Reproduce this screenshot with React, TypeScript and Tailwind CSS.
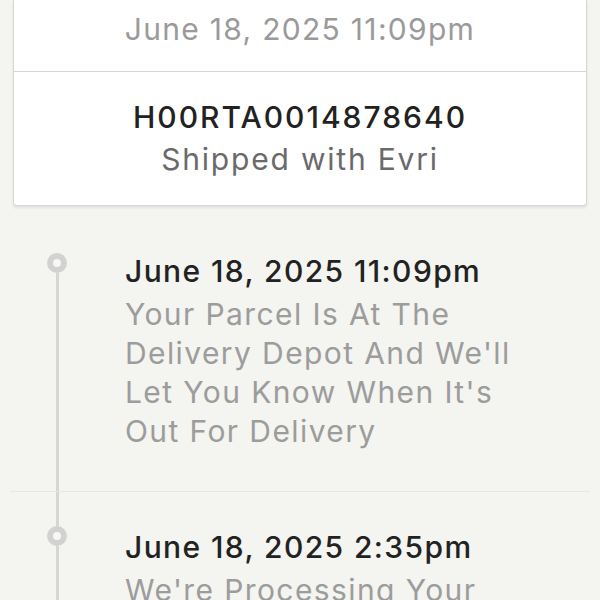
import React from "react";

const font = { fontFamily: "Inter, 'Liberation Sans', sans-serif" };

function Dot() {
  return <div className="w-[20px] h-[20px] rounded-full border-[6px] border-[#d2d2d0] bg-[#f7f7f5] shrink-0" />;
}

export default function App() {
  return (
    <div className="w-[600px] h-[600px] overflow-hidden bg-[#f4f4f0] text-[30px]" style={font}>
      {/* Card */}
      <div className="mx-[13px] w-[574px] bg-white border-x border-b border-[#d6d6d4] rounded-b-[4px] shadow-[0_2px_3px_rgba(0,0,0,0.08)]">
        <div className="h-[72px] pt-[8px] border-b border-[#d6d6d4] text-center leading-[42px] text-[#9a9a9a] tracking-[1.3px]">
          June 18, 2025 11:09pm
        </div>
        <div className="pt-[24px] pb-[25px] text-center leading-[42px]">
          <div className="text-[#222222] font-medium tracking-[2px]">H00RTA0014878640</div>
          <div className="text-[#6a6a6a] tracking-[1.8px]">Shipped with Evri</div>
        </div>
      </div>

      {/* Timeline */}
      <div className="mx-[10px]">
        <div className="flex border-b border-[#e6e6e2]">
          <div className="ml-[37px] w-[20px] flex flex-col items-center">
            <div className="h-[47px]" />
            <Dot />
            <div className="w-[3px] flex-1 bg-[#d6d6d4]" />
          </div>
          <div className="ml-[58px] pt-[46px] pb-[40px] w-[405px]">
            <div className="leading-[39px] font-medium text-[#222222] tracking-[1.4px]">June 18, 2025 11:09pm</div>
            <div className="mt-[4px] leading-[39px] text-[#9c9c9c] tracking-[1.4px]">
              Your Parcel Is At The Delivery Depot And We'll Let You Know When It's Out For Delivery
            </div>
          </div>
        </div>
        <div className="flex">
          <div className="ml-[37px] w-[20px] flex flex-col items-center">
            <div className="w-[3px] h-[34px] bg-[#d6d6d4]" />
            <Dot />
            <div className="w-[3px] flex-1 bg-[#d6d6d4]" />
          </div>
          <div className="ml-[58px] pt-[36px] pb-[40px] w-[405px]">
            <div className="leading-[39px] font-medium text-[#222222] tracking-[1.4px]">June 18, 2025 2:35pm</div>
            <div className="mt-[4px] leading-[39px] text-[#9c9c9c] tracking-[1.4px]">
              We're Processing Your Parcel At Our Hub And It Will Be On Its Way Soon
            </div>
          </div>
        </div>
      </div>
    </div>
  );
}
